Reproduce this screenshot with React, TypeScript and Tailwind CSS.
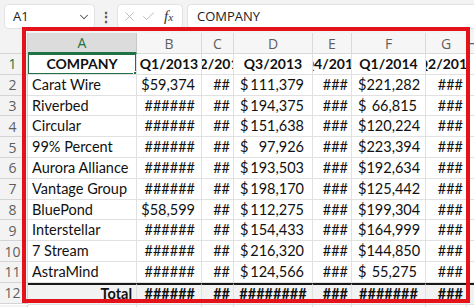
import { ChevronDown, X, Check } from "lucide-react";

type Row = {
  name: string;
  b: string;
  d: string;
  f: string;
};

const rows: Row[] = [
  { name: "Carat Wire", b: "$59,374", d: "111,379", f: "221,282" },
  { name: "Riverbed", b: "######", d: "194,375", f: "66,815" },
  { name: "Circular", b: "######", d: "151,638", f: "120,224" },
  { name: "99% Percent", b: "######", d: "97,926", f: "223,394" },
  { name: "Aurora Alliance", b: "######", d: "193,503", f: "192,634" },
  { name: "Vantage Group", b: "######", d: "198,170", f: "125,442" },
  { name: "BluePond", b: "$58,599", d: "112,275", f: "199,304" },
  { name: "Interstellar", b: "######", d: "154,433", f: "164,999" },
  { name: "7 Stream", b: "######", d: "216,320", f: "144,850" },
  { name: "AstraMind", b: "######", d: "124,566", f: "55,275" },
];

const gridCols = "grid grid-cols-[28px_109px_65px_32px_79px_39px_74px_41px_1fr]";
const cell = "h-[20.8px] border-r border-b border-[#e1e1e1] flex items-center overflow-hidden whitespace-nowrap";
const rowHead = "h-[20.8px] border-r border-b border-[#d4d4d4] bg-[#f3f3f3] flex items-center justify-center pr-[2px] text-[14px] text-[#5f5f5f] font-['Open_Sans',sans-serif]";

function Accounting({ value }: { value: string }) {
  return (
    <div className={`${cell} justify-between pl-[6px] pr-[8px]`}>
      <span>$</span>
      <span>{value}</span>
    </div>
  );
}

export default function App() {
  const letters = ["A", "B", "C", "D", "E", "F", "G", "H"];
  const headers = ["Q1/2013", "Q2/2013", "Q3/2013", "Q4/2013", "Q1/2014", "Q2/2014"];

  return (
    <div className="relative w-[474px] h-[307px] overflow-hidden bg-white font-['Lato',sans-serif] text-[14.5px] text-[#111]">
      {/* Formula bar */}
      <div className="h-[33px] bg-[#f3f3f3] flex items-start pt-[4px] pl-[4px] gap-[4px] font-['Open_Sans',sans-serif]">
        <div className="w-[91px] h-[25px] bg-white rounded-[4px] border border-[#e3e3e3] flex items-center justify-between pl-[8px] pr-[3px] text-[13px] text-[#222]">
          <span>A1</span>
          <ChevronDown size={14} strokeWidth={1.8} className="text-[#555]" />
        </div>
        <div className="w-[14px] h-[25px] flex items-center justify-center text-[14px] text-[#555] font-bold">⋮</div>
        <div className="w-[66px] h-[25px] bg-white rounded-[4px] border border-[#e3e3e3] flex items-center pl-[4px] gap-[4px] text-[#b5b5b5]">
          <X size={15} strokeWidth={1.4} />
          <Check size={15} strokeWidth={1.4} />
          <span className="ml-[4px] text-[15px] text-[#333] italic font-['Liberation_Serif',serif]">
            f<span className="text-[11px]">x</span>
          </span>
        </div>
        <div className="flex-1 h-[25px] bg-white rounded-l-[4px] border border-r-0 border-[#e3e3e3] flex items-center pl-[9px] text-[13px] text-[#222]">
          COMPANY
        </div>
      </div>

      {/* Sheet */}
      <div className={gridCols}>
        {/* Column headers */}
        <div className="h-[21px] bg-[#f3f3f3] border-r border-b border-[#d4d4d4]" />
        {letters.map((l, i) => (
          <div
            key={l}
            className={
              i === 0
                ? "h-[21px] bg-[#dcdcdc] border-r border-[#c8c8c8] border-b-2 border-b-[#217346] flex items-center justify-center text-[14px] text-[#217346] font-['Open_Sans',sans-serif]"
                : "h-[21px] bg-[#f6f6f6] border-r border-b border-[#dadada] flex items-center justify-center text-[14px] text-[#5f5f5f] font-['Open_Sans',sans-serif]"
            }
          >
            {l}
          </div>
        ))}

        {/* Row 1 */}
        <div className={`${rowHead} bg-[#dcdcdc] text-[#217346]`}>1</div>
        <div className={`${cell} relative justify-center font-bold text-[14px]`}>
          COMPANY
          <div className="absolute inset-[-1px] border-2 border-[#217346]" />
          <div className="absolute right-[-3px] bottom-[-3px] w-[6px] h-[6px] bg-[#217346] border border-white" />
        </div>
        {headers.map((h) => (
          <div key={h} className={`${cell} justify-center font-bold text-[14px]`}>
            {h}
          </div>
        ))}
        <div className={cell} />

        {rows.map((r, i) => (
          <div key={r.name} className="contents">
            <div className={rowHead}>{i + 2}</div>
            <div className={`${cell} pl-[4px]`}>{r.name}</div>
            <div className={`${cell} justify-end pr-[6px]`}>{r.b}</div>
            <div className={`${cell} justify-end pr-[3px]`}>##</div>
            <Accounting value={r.d} />
            <div className={`${cell} justify-end pr-[3px]`}>###</div>
            <Accounting value={r.f} />
            <div className={`${cell} justify-end pr-[3px]`}>###</div>
            <div className={cell} />
          </div>
        ))}

        {/* Total row */}
        <div className={rowHead}>12</div>
        {[
          { t: "Total", c: "justify-end pr-[4px]" },
          { t: "######", c: "justify-end pr-[6px]" },
          { t: "##", c: "justify-end pr-[3px]" },
          { t: "########", c: "justify-center" },
          { t: "###", c: "justify-end pr-[3px]" },
          { t: "#######", c: "justify-center" },
          { t: "###", c: "justify-end pr-[3px]" },
          { t: "", c: "" },
        ].map((c, i) => (
          <div
            key={i}
            className={`${cell} ${c.c} bg-[#f2f2f2] font-bold border-t-2 border-t-[#1a1a1a] h-[22px]`}
          >
            {c.t}
          </div>
        ))}
        <div className={rowHead}>13</div>
        {letters.map((l) => (
          <div key={l} className={cell} />
        ))}
      </div>

      {/* Red annotation frame */}
      <div className="absolute left-[22px] top-[27px] w-[448px] h-[276px] border-4 border-[#e4131b] pointer-events-none" />
    </div>
  );
}
